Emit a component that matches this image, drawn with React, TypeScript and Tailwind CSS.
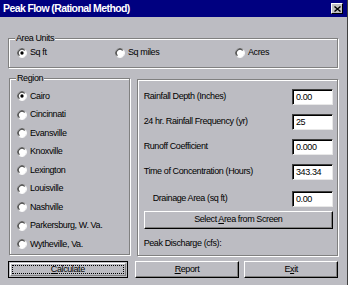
import React from 'react';

const regions = [
  'Cairo',
  'Cincinnati',
  'Evansville',
  'Knoxville',
  'Lexington',
  'Louisville',
  'Nashville',
  'Parkersburg, W. Va.',
  'Wytheville, Va.',
];

function Radio({ checked }: { checked?: boolean }) {
  return (
    <svg width="10" height="10" viewBox="0 0 12 12" className="shrink-0">
      <circle cx="6" cy="6" r="5" fill="#fff" />
      <path d="M2.1 9.9 A5.5 5.5 0 0 1 9.9 2.1" stroke="#808080" strokeWidth="1" fill="none" />
      <path d="M2.8 9.2 A4.5 4.5 0 0 1 9.2 2.8" stroke="#000" strokeWidth="1" fill="none" />
      <path d="M9.9 2.1 A5.5 5.5 0 0 1 2.1 9.9" stroke="#fff" strokeWidth="1" fill="none" />
      {checked && <circle cx="6" cy="6" r="2" fill="#000" />}
    </svg>
  );
}

function Field({ value }: { value: string }) {
  return (
    <div className="w-[41px] h-[16px] bg-white border border-t-[#404040] border-l-[#404040] border-r-[#e8e8e8] border-b-[#e8e8e8] shadow-[inset_1px_1px_0_#000] pl-[3px] pt-[1px] leading-[13px]">
      {value}
    </div>
  );
}

function Group({ label, className, children }: { label: string; className: string; children: React.ReactNode }) {
  return (
    <div className={`relative border border-[#808080] shadow-[1px_1px_0_#fff,inset_1px_1px_0_#fff] ${className}`}>
      <span className="absolute -top-[7px] left-[6px] px-[1px] bg-[#bcbcc2] leading-[12px]">{label}</span>
      {children}
    </div>
  );
}

export default function App() {
  return (
    <div className="w-[348px] h-[285px] bg-[#bcbcc2] overflow-hidden font-['Liberation_Sans',Arial,sans-serif] text-[9px] tracking-[-0.4px] text-black border-r border-r-[#404040]">
      {/* Title bar */}
      <div className="h-[17px] bg-[#000080] flex items-center justify-between pl-[3px] pr-[4px]">
        <span className="text-white font-bold text-[10.5px] tracking-[-0.6px]">Peak Flow (Rational Method)</span>
        <div className="w-[12px] h-[11px] bg-[#c0c0c0] border border-t-white border-l-white border-r-black border-b-black flex items-center justify-center">
          <svg width="7" height="6" viewBox="0 0 7 6">
            <path d="M0.5 0.5 L6.5 5.5 M6.5 0.5 L0.5 5.5" stroke="#000" strokeWidth="1.4" />
          </svg>
        </div>
      </div>

      <div className="pl-[8px] pr-[9px]">
        {/* Area units */}
        <Group label="Area Units" className="mt-[21px] h-[30px] flex items-center">
          <div className="flex items-center gap-[3px] ml-[8px] w-[98px]">
            <Radio checked />
            <span>Sq ft</span>
          </div>
          <div className="flex items-center gap-[3px] w-[120px]">
            <Radio />
            <span>Sq miles</span>
          </div>
          <div className="flex items-center gap-[3px]">
            <Radio />
            <span>Acres</span>
          </div>
        </Group>

        <div className="flex mt-[10px] gap-[7px]">
          {/* Region */}
          <Group label="Region" className="w-[121px] h-[177px] ml-[1px] pt-[8px] pl-[7px]">
            <div className="flex flex-col">
              {regions.map((r, i) => (
                <div key={r} className="h-[18.5px] flex items-center gap-[3px]">
                  <Radio checked={i === 0} />
                  <span>{r}</span>
                </div>
              ))}
            </div>
          </Group>

          {/* Inputs panel */}
          <div className="w-[202px] h-[177px] mt-[1px] border border-[#808080] shadow-[1px_1px_0_#fff,inset_1px_1px_0_#fff] pl-[6px] pr-[4px] pt-[9px] flex flex-col">
            <div className="flex items-center justify-between h-[16px]">
              <span>Rainfall Depth (Inches)</span>
              <Field value="0.00" />
            </div>
            <div className="flex items-center justify-between h-[16px] mt-[9px]">
              <span>24 hr. Rainfall Frequency (yr)</span>
              <Field value="25" />
            </div>
            <div className="flex items-center justify-between h-[16px] mt-[9px]">
              <span>Runoff Coefficient</span>
              <Field value="0.000" />
            </div>
            <div className="flex items-center justify-between h-[16px] mt-[9px]">
              <span>Time of Concentration (Hours)</span>
              <Field value="343.34" />
            </div>
            <div className="flex items-center justify-between h-[16px] mt-[11px]">
              <span className="ml-[9px]">Drainage Area (sq ft)</span>
              <Field value="0.00" />
            </div>
            <div className="mt-[4px] h-[18px] border border-t-white border-l-white border-r-black border-b-black shadow-[inset_-1px_-1px_0_#808080] flex items-center justify-center">
              <span>
                Select <span className="underline">A</span>rea from Screen
              </span>
            </div>
            <div className="mt-[8px]">Peak Discharge (cfs):</div>
          </div>
        </div>

        {/* Buttons */}
        <div className="flex mt-[5px] h-[17px]">
          <div className="w-[120px] border border-black p-[1px]">
            <div className="h-full border border-t-white border-l-white border-r-[#808080] border-b-[#808080] p-[1px]">
              <div className="h-full border border-dotted border-black flex items-center justify-center">
                <span><span className="underline">C</span>alculate</span>
              </div>
            </div>
          </div>
          <div className="w-[105px] ml-[7px] border border-t-white border-l-white border-r-black border-b-black shadow-[inset_-1px_-1px_0_#808080] flex items-center justify-center">
            <span><span className="underline">R</span>eport</span>
          </div>
          <div className="w-[94px] ml-[5px] border border-t-white border-l-white border-r-black border-b-black shadow-[inset_-1px_-1px_0_#808080] flex items-center justify-center">
            <span>E<span className="underline">x</span>it</span>
          </div>
        </div>
      </div>
    </div>
  );
}
